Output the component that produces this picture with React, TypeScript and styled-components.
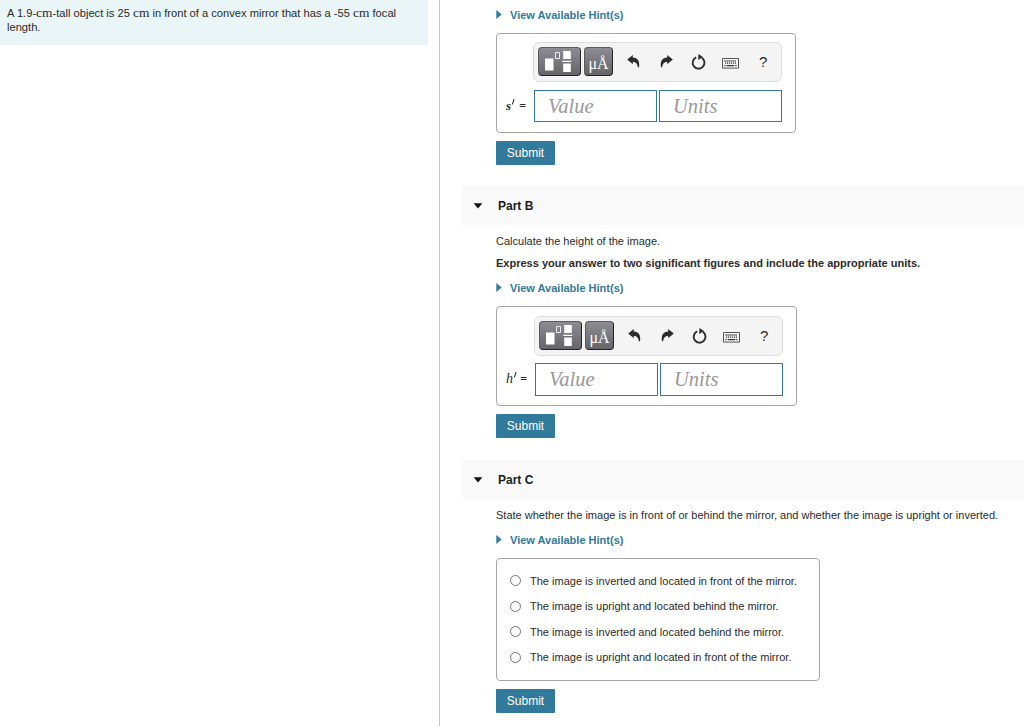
import React, { useState } from "react";
import styled, { createGlobalStyle, css } from "styled-components";

const Colors = {
  ACCENT: "#317a9b",
  TEXT: "#2b2b2b",
  BORDER: "#a6a6a6",
  PROBLEM: "#eaf5f7",
  HEADER: "#f9f9f9",
  TOOLBAR: "#f4f4f4",
};

const choices = [
  "The image is inverted and located in front of the mirror.",
  "The image is upright and located behind the mirror.",
  "The image is inverted and located behind the mirror.",
  "The image is upright and located in front of the mirror.",
];

export default function App() {
  const [selected, setSelected] = useState(-1);

  return (
    <>
      <GlobalStyle />
      <Page>
        <ProblemPane>
          <Problem>
            A 1.9-<Unit>cm</Unit>-tall object is 25 <Unit>cm</Unit> in front of a convex mirror that has a -55 <Unit>cm</Unit> focal
            <br />
            length.
          </Problem>
        </ProblemPane>
        <Parts>
          <Body>
            <Hints $height={33} $bottom={3} />
            <AnswerBox variable="s" />
            <Submit>Submit</Submit>
          </Body>

          <PartHeader title="Part B" $top={21} />
          <Body>
            <Text $height={32}>Calculate the height of the image.</Text>
            <Instruction>Express your answer to two significant figures and include the appropriate units.</Instruction>
            <Hints $height={37} $bottom={0} />
            <AnswerBox variable="h" large />
            <Submit>Submit</Submit>
          </Body>

          <PartHeader title="Part C" $top={22} />
          <Body>
            <Text $height={31}>
              State whether the image is in front of or behind the mirror, and whether the image is upright or inverted.
            </Text>
            <Hints $height={28} $bottom={8} />
            <Choices>
              {choices.map((choice, index) => (
                <Choice key={choice} onClick={() => setSelected(index)}>
                  <Radio $checked={selected === index} />
                  <ChoiceText>{choice}</ChoiceText>
                </Choice>
              ))}
            </Choices>
            <Submit>Submit</Submit>
          </Body>
        </Parts>
      </Page>
    </>
  );
}

function PartHeader({ title, $top }: { title: string; $top: number }) {
  return (
    <Header $top={$top}>
      <svg width="10" height="6" viewBox="0 0 10 6">
        <path d="M0.6 0.2h8.8L5 5.6z" fill="#111" />
      </svg>
      <Title>{title}</Title>
    </Header>
  );
}

function Hints(props: IHints) {
  return (
    <HintRow {...props}>
      <svg width="6" height="10" viewBox="0 0 6 10">
        <path d="M0.3 0L5.7 4.5L0.3 9z" fill={Colors.ACCENT} />
      </svg>
      <HintLink>View Available Hint(s)</HintLink>
    </HintRow>
  );
}

function AnswerBox({ variable, large }: { variable: string; large?: boolean }) {
  return (
    <Answer $large={large}>
      <Toolbar $large={large}>
        <ToolButton $width={43}>
          <TemplateIcon />
        </ToolButton>
        <ToolButton $width={29}>
          <Symbols>μÅ</Symbols>
        </ToolButton>
        <IconSlot>
          <ArrowIcon />
        </IconSlot>
        <IconSlot>
          <ArrowIcon flipped />
        </IconSlot>
        <IconSlot>
          <ResetIcon />
        </IconSlot>
        <IconSlot $drop={3}>
          <KeyboardIcon />
        </IconSlot>
        <IconSlot>?</IconSlot>
      </Toolbar>
      <Fields $large={large}>
        <Label $large={large}>
          <Variable $heavy={variable === "s"}>{variable}</Variable>
          <PrimeIcon />
          <Equals>=</Equals>
        </Label>
        <Field placeholder="Value" aria-label="Value" $large={large} />
        <Field placeholder="Units" aria-label="Units" $large={large} />
      </Fields>
    </Answer>
  );
}

function TemplateIcon() {
  return (
    <svg width="41" height="27" viewBox="0 0 41 27">
      <path d="M6 10.5h8.5v12H6zM24.2 3h7.6v8h-7.6zM24.2 15.6h7.6V24h-7.6zM23.3 12.7h9v1.2h-9z" fill="#fff" />
      <path d="M16.5 4.5h4v6h-4z" fill="none" stroke="#eee" />
    </svg>
  );
}

function ArrowIcon({ flipped }: { flipped?: boolean }) {
  return (
    <svg width="13" height="13" viewBox="0 0 13 13">
      <path
        d="M5.8 0L0.2 4.6l5.6 4.7V6.9c2.8-.1 4.6 1.4 5 5.3h1.2C13 6.8 11 2.6 5.8 2.5z"
        fill="#2d2d2d"
        transform={flipped ? "translate(13 0) scale(-1 1)" : undefined}
      />
    </svg>
  );
}

function ResetIcon() {
  return (
    <svg width="15" height="16" viewBox="0 0 15 16">
      <path d="M10.9 3.9A5.9 5.9 0 1 1 5.2 3.4" fill="none" stroke="#2d2d2d" strokeWidth="1.9" />
      <path d="M7.4 0l4.6 3.1-4.8 3z" fill="#2d2d2d" />
    </svg>
  );
}

function KeyboardIcon() {
  return (
    <svg width="17" height="11" viewBox="0 0 17 11">
      <path d="M0.5 0.5h16v9.6h-16z" fill="#f7f7f7" stroke="#555" />
      <path d="M2.5 3h12M3 5.2h11" stroke="#333" strokeWidth="1.3" strokeDasharray="1.2 0.8" />
      <path d="M2.4 7.6h1.3M4.7 7.6h7.5M13.2 7.6h1.3" stroke="#333" strokeWidth="1.3" />
    </svg>
  );
}

// slanted stroke that marks the image side variables
function PrimeIcon() {
  return (
    <svg width="4" height="15" viewBox="0 0 4 15">
      <path d="M3 0.2L1.4 5.4" stroke={Colors.TEXT} strokeWidth="1.1" />
    </svg>
  );
}

interface IHints {
  $height: number;
  $bottom: number;
}

const GlobalStyle = createGlobalStyle`
  * {
    box-sizing: border-box;
  }

  body {
    margin: 0;
    background: #fff;
    color: ${Colors.TEXT};
    font-family: "Liberation Sans", Arial, sans-serif;
    font-size: 11.03px;
    overflow: hidden;
  }

  svg {
    display: block;
    flex: none;
  }
`;

const Page = styled.div`
  display: flex;
  width: 1024px;
  height: 726px;
`;

const ProblemPane = styled.aside`
  width: 440px;
  border-right: 1px solid #c3c9d8;
`;

const Problem = styled.div`
  width: 428px;
  height: 45px;
  padding: 7px 0 0 7px;
  background: ${Colors.PROBLEM};
  font-size: 11.15px;
  line-height: 13.5px;
  white-space: nowrap;
`;

const Unit = styled.span`
  font-family: "Liberation Serif", serif;
  font-size: 13.4px;
  line-height: 10px;
`;

const Parts = styled.main`
  flex: 1;
  padding-left: 22px;
`;

const Body = styled.section`
  display: flex;
  flex-direction: column;
  align-items: flex-start;
  padding-left: 34px;
`;

const Header = styled.header<{ $top: number }>`
  display: flex;
  align-items: center;
  height: 39px;
  margin-top: ${({ $top }) => $top}px;
  padding-left: 11px;
  background: ${Colors.HEADER};
`;

const Title = styled.h2`
  margin: 0 0 0 15px;
  font-size: 12px;
  font-weight: bold;
  color: #1c1c1c;
`;

const Text = styled.p`
  height: ${({ $height }: { $height: number }) => $height}px;
  margin: 0;
  line-height: 32px;
  white-space: nowrap;
`;

const Instruction = styled.p`
  height: 12px;
  margin: 0;
  font-weight: bold;
  line-height: 13px;
  white-space: nowrap;
`;

const HintRow = styled.div<IHints>`
  display: flex;
  align-items: center;
  height: ${({ $height }) => $height}px;
  padding-bottom: ${({ $bottom }) => $bottom}px;
`;

const HintLink = styled.a`
  margin-left: 8px;
  color: ${Colors.ACCENT};
  font-weight: bold;
  cursor: pointer;
`;

const Answer = styled.div<{ $large?: boolean }>`
  width: ${({ $large }) => $large ? 301 : 300}px;
  height: 100px;
  padding-top: ${({ $large }) => $large ? 9 : 8}px;
  border: 1px solid ${Colors.BORDER};
  border-radius: 4px;
`;

const Toolbar = styled.div<{ $large?: boolean }>`
  display: flex;
  align-items: center;
  width: 249px;
  height: 40px;
  margin-left: ${({ $large }) => $large ? 37 : 36}px;
  padding: 0 0 1px 4px;
  background: ${Colors.TOOLBAR};
  border: 1px solid #dedede;
  border-radius: 6px;
`;

const ToolButton = styled.button<{ $width: number }>`
  display: flex;
  flex: none;
  align-items: center;
  justify-content: center;
  width: ${({ $width }) => $width}px;
  height: 29px;
  margin-right: 3px;
  padding: 0;
  color: #fff;
  background: linear-gradient(#8d8c92, #656569);
  border: 1px solid #5a5a5e;
  border-right-color: #222;
  border-bottom-color: #222;
  border-radius: 4px;
  cursor: pointer;

  & + span {
    margin-left: 1.5px;
  }
`;

const Symbols = styled.span`
  padding-top: 5px;
  font-family: "Liberation Serif", serif;
  font-size: 16px;
  line-height: 22px;
`;

const IconSlot = styled.span<{ $drop?: number }>`
  display: flex;
  flex: none;
  align-items: center;
  justify-content: center;
  width: 32.4px;
  height: 20px;
  padding-top: ${({ $drop }) => $drop || 0}px;
  font-size: 15px;
  cursor: pointer;
`;

const Fields = styled.div<{ $large?: boolean }>`
  display: flex;
  gap: 2px;
  margin-top: ${({ $large }) => $large ? 7 : 8}px;
`;

const Label = styled.label<{ $large?: boolean }>`
  display: flex;
  align-items: center;
  width: ${({ $large }) => $large ? 36 : 35}px;
  height: 32px;
  padding-left: 9px;
  font-family: "Liberation Serif", serif;
`;

const Variable = styled.i<{ $heavy: boolean }>`
  width: 7px;
  font-size: 14px;
  ${({ $heavy }) => $heavy && css`
    width: 5px;
    font-size: 13px;
    font-weight: bold;
  `}
`;

const Equals = styled.span`
  margin-left: auto;
  padding: 1px 6px 0 0;
  font-size: 12px;
  font-weight: bold;
`;

const Field = styled.input<{ $large?: boolean }>`
  width: 123px;
  height: ${({ $large }) => $large ? 33 : 32}px;
  padding: 0 0 0 13px;
  border: 1px solid ${Colors.ACCENT};
  border-radius: 0;
  outline: none;
  font: italic 20.5px "Liberation Serif", serif;

  &::placeholder {
    color: #999;
    opacity: 1;
  }
`;

const Submit = styled.button`
  width: 59px;
  height: 24px;
  margin-top: 8px;
  padding: 0;
  color: #fff;
  background: ${Colors.ACCENT};
  border: 0;
  border-radius: 1px;
  font: 12px "Liberation Sans", Arial, sans-serif;
  cursor: pointer;
`;

const Choices = styled.div`
  width: 324px;
  height: 123px;
  padding: 9px 0 0 13px;
  border: 1px solid ${Colors.BORDER};
  border-radius: 4px;
`;

const Choice = styled.div`
  display: flex;
  align-items: center;
  height: 25.5px;
  cursor: pointer;
`;

const Radio = styled.span<{ $checked: boolean }>`
  width: 11px;
  height: 11px;
  border: 1px solid #767676;
  border-radius: 50%;
  ${({ $checked }) => $checked && css`
    background: ${Colors.ACCENT};
    box-shadow: inset 0 0 0 2px #fff;
  `}
`;

const ChoiceText = styled.span`
  margin-left: 9px;
`;
